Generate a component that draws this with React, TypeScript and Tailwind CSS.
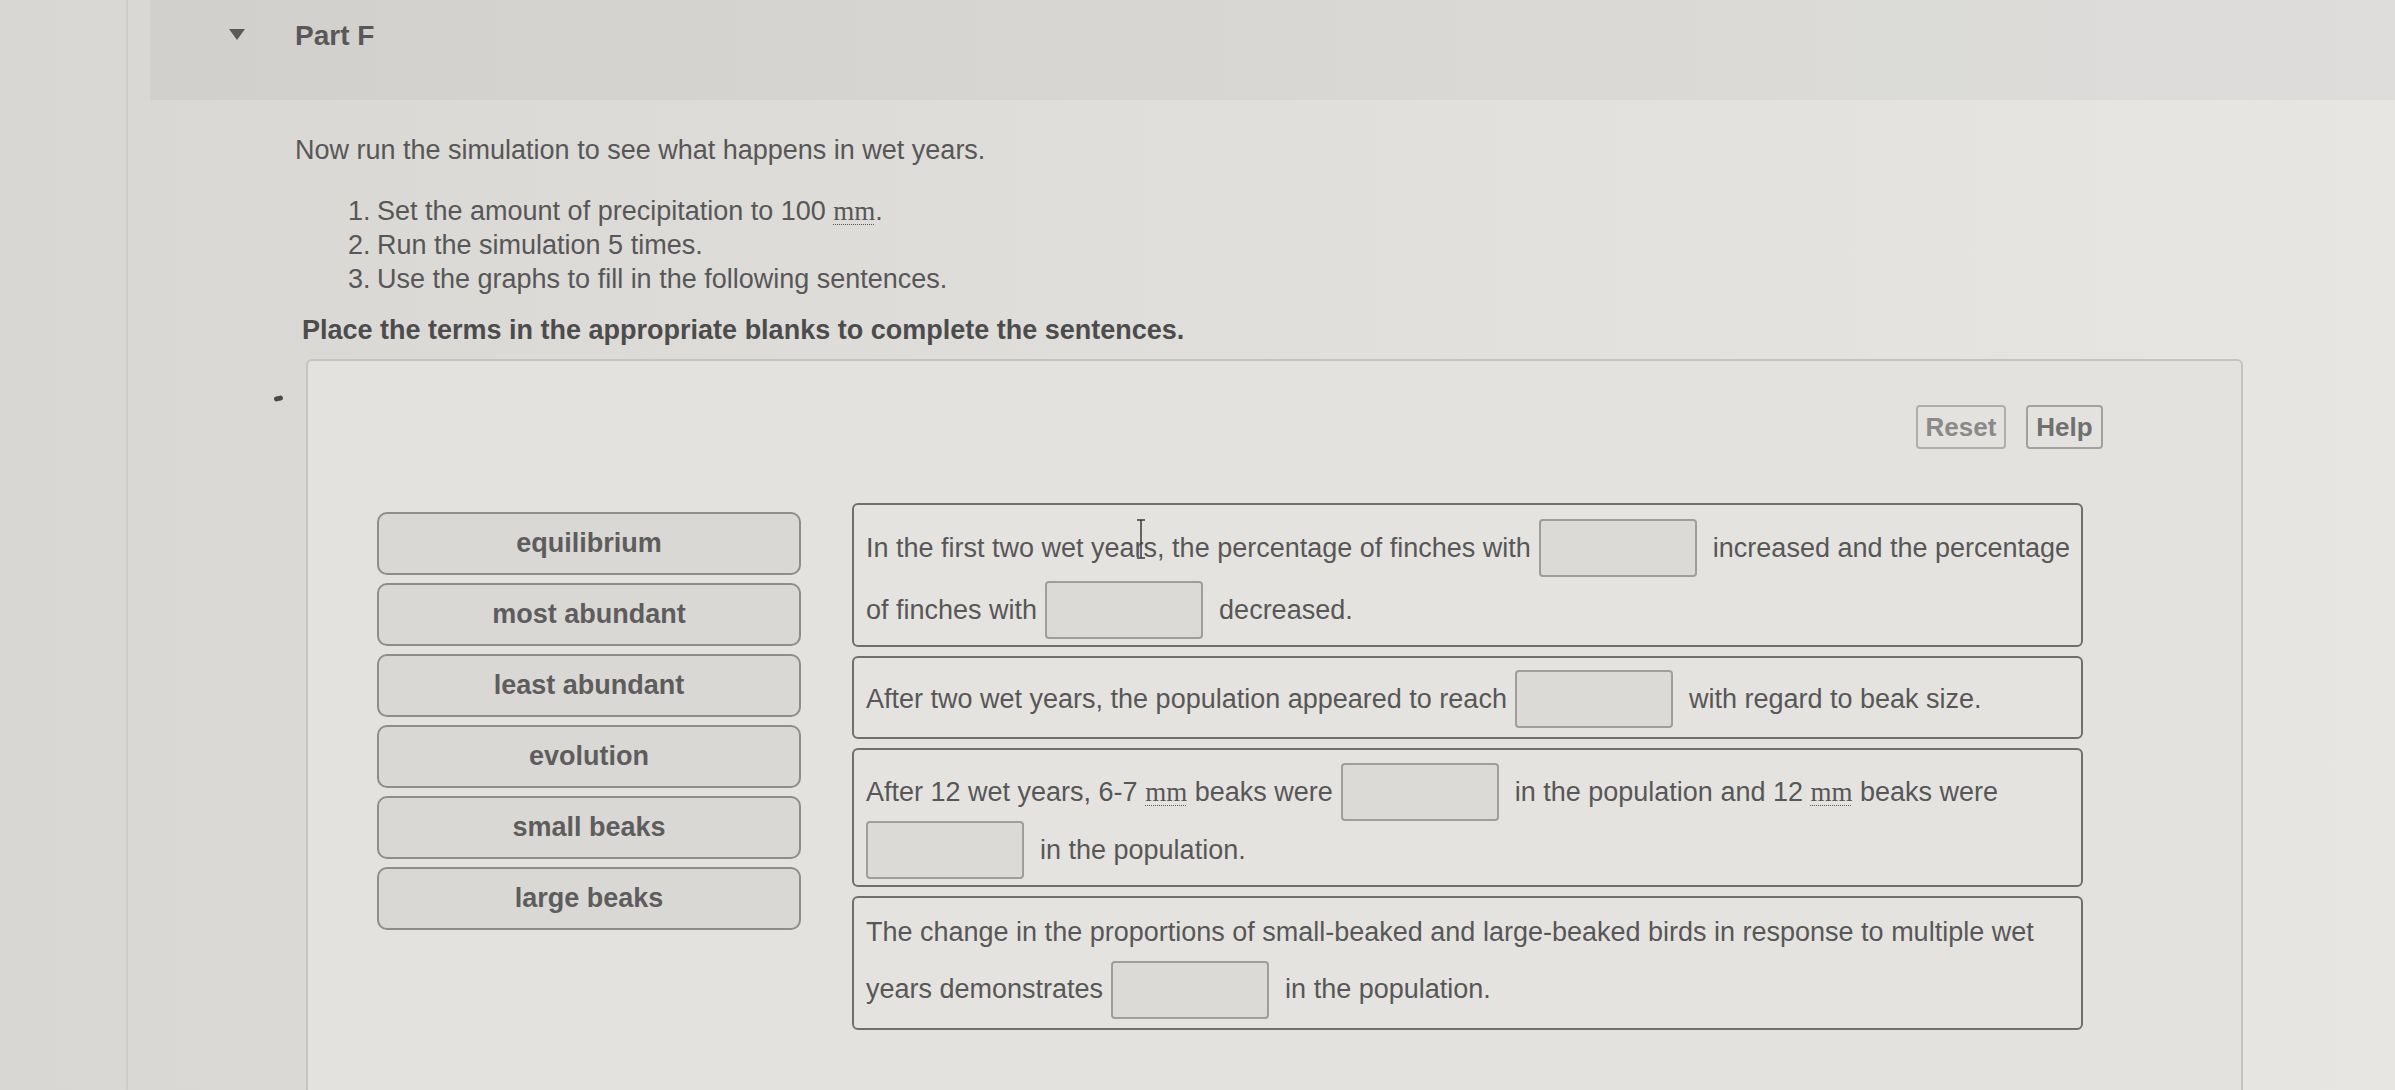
import type { ReactNode } from "react";

const font = { fontFamily: '"Liberation Sans", Arial, sans-serif' };

const terms = ["equilibrium", "most abundant", "least abundant", "evolution", "small beaks", "large beaks"];

function Mm() {
  return (
    <span className="underline decoration-dotted decoration-1 underline-offset-4" style={{ fontFamily: '"Liberation Serif", serif' }}>
      mm
    </span>
  );
}

function Blank() {
  return <span className="ml-[8px] mr-[16px] inline-block h-[58px] w-[158px] shrink-0 rounded-[4px] border-2 border-[#a09e9b] bg-[#dcdad7]" />;
}

function Line({ children, className = "h-[62px]" }: { children: ReactNode; className?: string }) {
  return <div className={`flex items-center whitespace-nowrap ${className}`}>{children}</div>;
}

function SentenceBox({ children, className = "" }: { children: ReactNode; className?: string }) {
  return (
    <div className={`relative rounded-[6px] border-2 border-[#6f6f6f] bg-[#e5e3e0] px-[12px] text-[27px] text-[#575757] ${className}`}>
      {children}
    </div>
  );
}

export default function App() {
  return (
    <div className="flex h-[1090px] w-[2395px] overflow-hidden bg-linear-to-r from-[#d9d7d3] to-[#e7e6e3]" style={font}>
      <div className="w-[128px] shrink-0 border-r-2 border-[#cfcdc9]" />
      <div className="w-[22px] shrink-0" />

      <main className="min-w-0 flex-1">
        <header className="h-[100px] bg-black/[0.035]">
          <div className="flex h-[72px] items-center pl-[79px]">
            <svg width="16" height="11" viewBox="0 0 16 11" className="mt-[-4px]">
              <path d="M0 0 H16 L8 11 Z" fill="#5a5a5a" />
            </svg>
            <h2 className="ml-[50px] text-[28px] font-bold text-[#585858]">Part F</h2>
          </div>
        </header>

        <p className="ml-[145px] mt-[34px] text-[27px] leading-[32px] text-[#575757]">
          Now run the simulation to see what happens in wet years.
        </p>

        <ol className="ml-[198px] mt-[28px] text-[27px] leading-[34px] text-[#575757]">
          <li className="flex">
            <span className="w-[29px]">1.</span>
            <span>
              Set the amount of precipitation to 100 <Mm />.
            </span>
          </li>
          <li className="flex">
            <span className="w-[29px]">2.</span>
            <span>Run the simulation 5 times.</span>
          </li>
          <li className="flex">
            <span className="w-[29px]">3.</span>
            <span>Use the graphs to fill in the following sentences.</span>
          </li>
        </ol>

        <p className="ml-[152px] mt-[18px] text-[27px] font-bold leading-[32px] text-[#4c4c4c]">
          Place the terms in the appropriate blanks to complete the sentences.
        </p>

        <div className="ml-[124px] mt-[13px] flex items-start gap-[23px]">
          <span className="mt-[37px] h-[5px] w-[9px] -rotate-12 rounded-full bg-[#4a4a4a]" />

          <section className="h-[760px] w-[1937px] shrink-0 rounded-t-[6px] border-2 border-[#c6c4c0] bg-[#e4e2df] pl-[69px] pr-[138px] pt-[44px]">
            <div className="flex justify-end gap-[20px]">
              <button
                type="button"
                className="h-[44px] w-[90px] rounded-[4px] border-2 border-[#b0aeab] text-[26px] font-bold text-[#8a8a8a]"
              >
                Reset
              </button>
              <button
                type="button"
                className="h-[44px] w-[77px] rounded-[4px] border-2 border-[#a3a19e] text-[26px] font-bold text-[#707070]"
              >
                Help
              </button>
            </div>

            <div className="mt-[54px] flex gap-[51px]">
              <div className="mt-[9px] flex w-[424px] shrink-0 flex-col gap-[8px]">
                {terms.map((t) => (
                  <div
                    key={t}
                    className="flex h-[63px] items-center justify-center rounded-[10px] border-2 border-[#8d8d8d] bg-[#dad8d5] text-[27px] font-bold text-[#5d5d5d]"
                  >
                    {t}
                  </div>
                ))}
              </div>

              <div className="flex w-[1231px] flex-col gap-[9px]">
                <SentenceBox className="pb-[4px] pt-[12px]">
                  <Line>
                    In the first two wet years, the percentage of finches with
                    <Blank />
                    increased and the percentage
                  </Line>
                  <Line>
                    of finches with
                    <Blank />
                    decreased.
                  </Line>
                  <svg width="12" height="40" viewBox="0 0 12 40" className="absolute left-[281px] top-[14px]">
                    <path d="M2 1 H10 M6 1 V39 M2 39 H10" stroke="#3a3a3a" strokeWidth="1.5" fill="none" />
                  </svg>
                </SentenceBox>

                <SentenceBox className="pb-[7px] pt-[10px]">
                  <Line>
                    After two wet years, the population appeared to reach
                    <Blank />
                    with regard to beak size.
                  </Line>
                </SentenceBox>

                <SentenceBox className="pb-[6px] pt-[13px]">
                  <Line className="h-[58px]">
                    After 12 wet years, 6-7&nbsp;<Mm />&nbsp;beaks were
                    <Blank />
                    in the population and 12&nbsp;<Mm />&nbsp;beaks were
                  </Line>
                  <Line className="h-[58px]">
                    <span className="-ml-[8px]" />
                    <Blank />
                    in the population.
                  </Line>
                </SentenceBox>

                <SentenceBox className="pb-[10px] pt-[6px]">
                  <Line className="h-[57px]">
                    The change in the proportions of small-beaked and large-beaked birds in response to multiple wet
                  </Line>
                  <Line className="h-[57px]">
                    years demonstrates
                    <Blank />
                    in the population.
                  </Line>
                </SentenceBox>
              </div>
            </div>
          </section>
        </div>
      </main>
    </div>
  );
}
